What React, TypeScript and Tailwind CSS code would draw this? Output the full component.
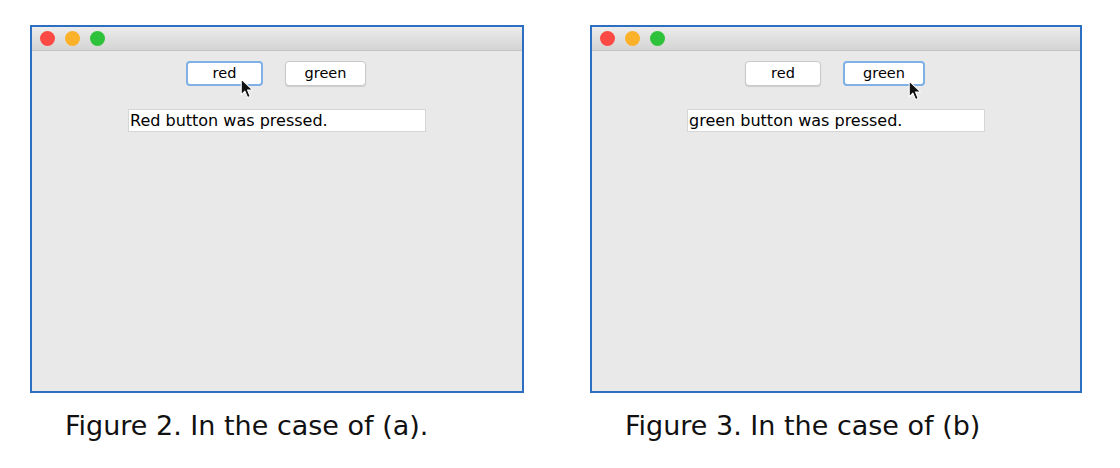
import React from 'react';

const uiFont = { fontFamily: '"DejaVu Sans", "Noto Sans", sans-serif' };

const Cursor: React.FC<{ className: string }> = ({ className }) => (
  <svg className={className} width="14" height="21" viewBox="0 0 13 20">
    <path d="M1 1 L1 16 L4.5 12.5 L7 18.5 L9.5 17.5 L7 11.5 L12 11.5 Z" fill="#111" stroke="#fff" strokeWidth="1" strokeLinejoin="round" />
  </svg>
);

interface BtnProps {
  label: string;
  width: string;
  focused?: boolean;
}

const MacButton: React.FC<BtnProps> = ({ label, width, focused }) => (
  <div
    className={`${width} h-[25px] flex items-center justify-center rounded-[4px] bg-white text-[14.5px] text-black ${
      focused ? 'border-2 border-[#7fb0e6]' : 'border border-[#c9c9c9] shadow-[0_1px_1px_rgba(0,0,0,0.12)]'
    }`}
  >
    {label}
  </div>
);

interface WindowProps {
  pressed: 'red' | 'green';
  width: string;
}

const MacWindow: React.FC<WindowProps> = ({ pressed, width }) => (
  <div className={`relative ${width} h-[368px] border-2 border-[#2c6fc0] bg-[#e9e9e9] flex flex-col`} style={uiFont}>
    <div className="h-[24px] flex items-center gap-[10px] pl-[8px] bg-gradient-to-b from-[#ececec] to-[#d4d4d4] border-b border-[#c4c4c4]">
      <span className="w-[15px] h-[15px] rounded-full bg-[#fb4a46]" />
      <span className="w-[15px] h-[15px] rounded-full bg-[#fbb22a]" />
      <span className="w-[15px] h-[15px] rounded-full bg-[#2dc23a]" />
    </div>
    <div className="flex justify-center gap-[22px] mt-[10px] pr-[2px]">
      {pressed === 'red' ? (
        <>
          <MacButton label="red" width="w-[77px]" focused />
          <MacButton label="green" width="w-[81px]" />
        </>
      ) : (
        <>
          <MacButton label="red" width="w-[76px]" />
          <MacButton label="green" width="w-[82px]" focused />
        </>
      )}
    </div>
    <div className="flex justify-center mt-[23px]">
      <div className="w-[298px] h-[23px] bg-white border border-[#d6d6d6] flex items-center pl-[1px] text-[16px] text-black leading-none">
        {pressed === 'red' ? 'Red button was pressed.' : 'green button was pressed.'}
      </div>
    </div>
    {pressed === 'red' ? (
      <Cursor className="absolute left-[208px] top-[51px]" />
    ) : (
      <Cursor className="absolute left-[316px] top-[53px]" />
    )}
  </div>
);

const Figure: React.FC<{ pressed: 'red' | 'green'; width: string; caption: string }> = ({ pressed, width, caption }) => (
  <div className="flex flex-col">
    <MacWindow pressed={pressed} width={width} />
    <div className="mt-[13px] pl-[35px] text-[27px] text-[#111] leading-[40px]" style={{ fontFamily: '"DejaVu Sans", sans-serif' }}>
      {caption}
    </div>
  </div>
);

export default function App() {
  return (
    <div className="w-[1120px] h-[468px] bg-white flex gap-[66px] pt-[25px] pl-[30px]">
      <Figure pressed="red" width="w-[494px]" caption="Figure 2. In the case of (a)." />
      <Figure pressed="green" width="w-[492px]" caption="Figure 3. In the case of (b)" />
    </div>
  );
}
